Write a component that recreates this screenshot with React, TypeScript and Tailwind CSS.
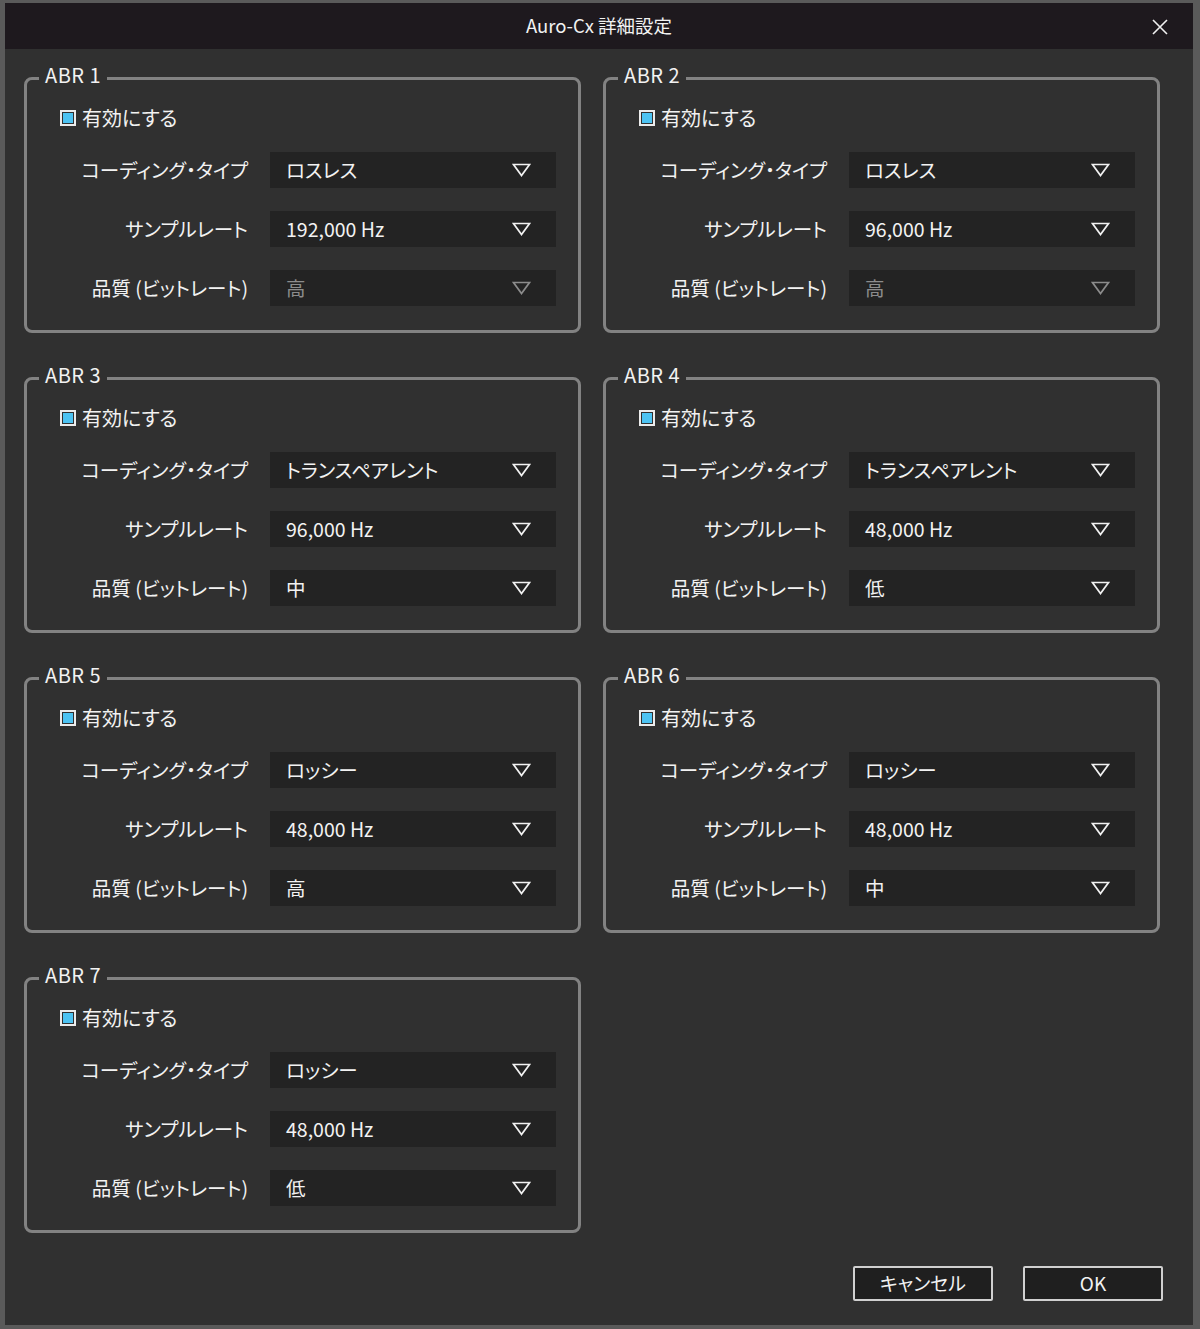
const font = "font-['Noto_Sans_CJK_JP','Noto_Sans',sans-serif] [font-feature-settings:'palt']";

type Group = {
  name: string;
  coding: string;
  rate: string;
  quality: string;
  qualityDisabled?: boolean;
};

const groups: Group[] = [
  { name: "ABR 1", coding: "ロスレス", rate: "192,000 Hz", quality: "高", qualityDisabled: true },
  { name: "ABR 2", coding: "ロスレス", rate: "96,000 Hz", quality: "高", qualityDisabled: true },
  { name: "ABR 3", coding: "トランスペアレント", rate: "96,000 Hz", quality: "中" },
  { name: "ABR 4", coding: "トランスペアレント", rate: "48,000 Hz", quality: "低" },
  { name: "ABR 5", coding: "ロッシー", rate: "48,000 Hz", quality: "高" },
  { name: "ABR 6", coding: "ロッシー", rate: "48,000 Hz", quality: "中" },
  { name: "ABR 7", coding: "ロッシー", rate: "48,000 Hz", quality: "低" },
];

function Triangle({ disabled }: { disabled?: boolean }) {
  return (
    <svg width="19" height="14" viewBox="0 0 19 14" className="shrink-0">
      <polygon
        points="1.5,1.5 17.5,1.5 9.5,12.5"
        fill="none"
        stroke={disabled ? "#8c8c8c" : "#f2f2f2"}
        strokeWidth="1.7"
        strokeLinejoin="miter"
      />
    </svg>
  );
}

function Row({ label, value, disabled }: { label: string; value: string; disabled?: boolean }) {
  return (
    <div className="flex items-center justify-end gap-[22px] pr-[22px]">
      <span className="text-[19.5px] leading-[24px] text-[#f2f2f2]">{label}</span>
      <div className="flex h-[36px] w-[286px] items-center justify-between bg-[#232323] pl-[16px] pr-[25px]">
        <span className={`text-[19.5px] leading-[24px] ${disabled ? "text-[#8c8c8c]" : "text-[#f2f2f2]"}`}>
          {value}
        </span>
        <Triangle disabled={disabled} />
      </div>
    </div>
  );
}

function GroupBox({ g }: { g: Group }) {
  return (
    <fieldset className="m-0 rounded-[8px] border-[3px] border-[#828282] p-0">
      <legend className="relative top-[-3px] ml-[12px] px-[6px] text-[20px] leading-[24px] tracking-[0.5px] text-[#f2f2f2]">
        {g.name}
      </legend>
      <div className="flex flex-col pb-[24px] pt-[16px]">
        <div className="flex items-center gap-[6px] pl-[33px]">
          <div className="h-[16px] w-[16px] border-2 border-[#ececec] p-px">
            <div className="h-full w-full bg-[#4dc3f2]" />
          </div>
          <span className="text-[20px] leading-[24px] text-[#f2f2f2]">有効にする</span>
        </div>
        <div className="mt-[22px] flex flex-col gap-[23px]">
          <Row label="コーディング・タイプ" value={g.coding} />
          <Row label="サンプルレート" value={g.rate} />
          <Row label="品質 (ビットレート)" value={g.quality} disabled={g.qualityDisabled} />
        </div>
      </div>
    </fieldset>
  );
}

export default function App() {
  return (
    <div className={`h-[1329px] w-[1200px] bg-[#5a5a5a] pb-[4px] pl-[5px] pr-[7px] pt-[3px] ${font}`}>
      <div className="flex h-full flex-col bg-[#303030]">
        {/* Title bar */}
        <div className="relative flex h-[46px] shrink-0 items-center justify-center bg-[#1e191e]">
          <span className="text-[18.5px] text-[#f2f2f2]">Auro-Cx 詳細設定</span>
          <svg width="16" height="16" viewBox="0 0 16 16" className="absolute right-[25px] top-[16px]">
            <path d="M1 1 L15 15 M15 1 L1 15" stroke="#f0f0f0" strokeWidth="1.6" />
          </svg>
        </div>

        {/* Groups */}
        <div className="grid grid-cols-2 gap-x-[22px] gap-y-[33px] pl-[19px] pr-[33px] pt-[17px]">
          {groups.map((g) => (
            <GroupBox key={g.name} g={g} />
          ))}
        </div>

        {/* Buttons */}
        <div className="mt-auto flex justify-end gap-[30px] pb-[24px] pr-[30px]">
          <button className="h-[35px] w-[140px] rounded-[2px] border-2 border-[#d0d0d0] bg-[#1f1f1f] text-[19px] text-[#f2f2f2]">
            キャンセル
          </button>
          <button className="h-[35px] w-[140px] rounded-[2px] border-2 border-[#d0d0d0] bg-[#1f1f1f] text-[19px] text-[#f2f2f2]">
            OK
          </button>
        </div>
      </div>
    </div>
  );
}
